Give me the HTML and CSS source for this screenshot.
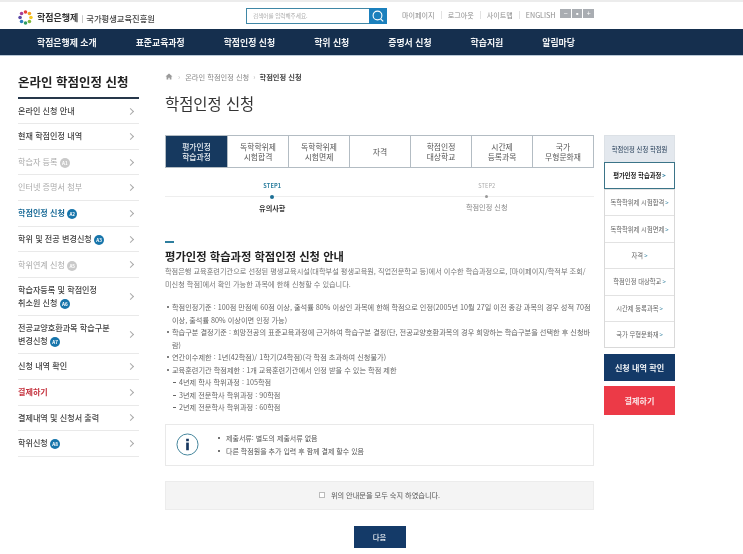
FILE: index.html
```html
<!DOCTYPE html>
<html lang="ko">
<head>
<meta charset="utf-8">
<title>학점인정 신청</title>
<link rel="stylesheet" href="styles.css">
</head>
<body>
<header class="top">
  <div class="brand">
    <svg class="logo" viewBox="0 0 16 16" aria-hidden="true">
      <circle cx="8" cy="2.2" r="1.9" fill="#e8423c"/><circle cx="12.2" cy="3.8" r="1.9" fill="#f2a11f"/>
      <circle cx="13.8" cy="8" r="1.9" fill="#f4c81e"/><circle cx="12.2" cy="12.2" r="1.9" fill="#7cb63a"/>
      <circle cx="8" cy="13.8" r="1.9" fill="#2f9d63"/><circle cx="3.8" cy="12.2" r="1.9" fill="#2a7fc0"/>
      <circle cx="2.2" cy="8" r="1.9" fill="#5b4aa8"/><circle cx="3.8" cy="3.8" r="1.9" fill="#a83f98"/>
    </svg>
    <strong class="brand-main">학점은행제</strong><span class="brand-bar">|</span><span class="brand-sub">국가평생교육진흥원</span>
  </div>
  <form class="search">
    <span class="search-input">검색어를 입력해주세요.</span>
    <span class="search-btn"><svg viewBox="0 0 18 16" aria-hidden="true"><circle cx="8.5" cy="7.5" r="4.4" fill="none" stroke="#fff" stroke-width="1.1"/><path d="M11.6 10.8 14.2 13.4" stroke="#fff" stroke-width="1.2"/></svg></span>
  </form>
  <nav class="util">
    <a>마이페이지</a><a>로그아웃</a><a>사이트맵</a><a class="last">ENGLISH</a>
  </nav>
  <div class="sizer"><span>−</span><span>▪</span><span>+</span></div>
</header>
<nav class="gnb">
  <a>학점은행제 소개</a><a>표준교육과정</a><a>학점인정 신청</a><a>학위 신청</a><a>증명서 신청</a><a>학습지원</a><a>알림마당</a>
</nav>
<div class="wrap">
  <aside class="side">
    <h2>온라인 학점인정 신청</h2>
    <ul class="side-list">
      <li class="h25">온라인 신청 안내</li>
      <li>현재 학점인정 내역</li>
      <li class="off"><span>학습자 등록 <i class="badge">A1</i></span></li>
      <li class="off">인터넷 증명서 첨부</li>
      <li class="on"><span>학점인정 신청 <i class="badge">A2</i></span></li>
      <li><span>학위 및 전공 변경신청 <i class="badge">A3</i></span></li>
      <li class="off"><span>학위연계 신청 <i class="badge">A5</i></span></li>
      <li class="two"><span>학습자등록 및 학점인정<br>취소원 신청 <i class="badge">A6</i></span></li>
      <li class="two"><span>전공교양호환과목 학습구분<br>변경신청 <i class="badge">A7</i></span></li>
      <li>신청 내역 확인</li>
      <li class="pay">결제하기</li>
      <li>결제내역 및 신청서 출력</li>
      <li><span>학위신청 <i class="badge">A8</i></span></li>
    </ul>
  </aside>
  <main class="main">
    <div class="crumb">
      <svg viewBox="0 0 10 9" aria-hidden="true"><path d="M5 .5 .5 4.6h1.4V8.5h2.2V6h1.8v2.5h2.2V4.6h1.4z" fill="#9a9a9a"/></svg>
      <span class="sep">›</span><span>온라인 학점인정 신청</span><span class="sep">›</span><b>학점인정 신청</b>
    </div>
    <h1>학점인정 신청</h1>
    <div class="tabs">
      <a class="active">평가인정<br>학습과정</a><a>독학학위제<br>시험합격</a><a>독학학위제<br>시험면제</a><a>자격</a><a>학점인정<br>대상학교</a><a>시간제<br>등록과목</a><a>국가<br>무형문화재</a>
    </div>
    <div class="steps">
      <div class="step cur"><small>STEP1</small><i></i><b>유의사항</b></div>
      <div class="step"><small>STEP2</small><i></i><b>학점인정 신청</b></div>
    </div>
    <h3>평가인정 학습과정 학점인정 신청 안내</h3>
    <p class="lead">학점은행 교육훈련기관으로 선정된 평생교육시설(대학부설 평생교육원, 직업전문학교 등)에서 이수한 학습과정으로, [마이페이지/학적부 조회/<br>미신청 학점]에서 확인 가능한 과목에 한해 신청할 수 있습니다.</p>
    <ul class="rules">
      <li>학점인정기준 : 100점 만점에 60점 이상, 출석률 80% 이상인 과목에 한해 학점으로 인정(2005년 10월 27일 이전 종강 과목의 경우 성적 70점<br>이상, 출석률 80% 이상이면 인정 가능)</li>
      <li>학습구분 결정기준 : 희망전공의 표준교육과정에 근거하여 학습구분 결정(단, 전공교양호환과목의 경우 희망하는 학습구분을 선택한 후 신청바<br>람)</li>
      <li>연간이수제한 : 1년(42학점)/ 1학기(24학점)(각 학점 초과하여 신청불가)</li>
      <li>교육훈련기관 학점제한 : 1개 교육훈련기관에서 인정 받을 수 있는 학점 제한
        <ul>
          <li>4년제 학사 학위과정 : 105학점</li>
          <li>3년제 전문학사 학위과정 : 90학점</li>
          <li>2년제 전문학사 학위과정 : 60학점</li>
        </ul>
      </li>
    </ul>
    <div class="info">
      <span class="info-icon"><svg viewBox="0 0 24 24" aria-hidden="true"><circle cx="12" cy="12" r="11" fill="none" stroke="#3f8299" stroke-width="1"/><rect x="10.6" y="6" width="2.8" height="2.6" fill="#17375f"/><rect x="10.6" y="10" width="2.8" height="8" fill="#17375f"/></svg></span>
      <ul>
        <li>제출서류: 별도의 제출서류 없음</li>
        <li>다른 학점원을 추가 입력 후 함께 결제 할수 있음</li>
      </ul>
    </div>
    <label class="agree"><span class="box"></span>위의 안내문을 모두 숙지 하였습니다.</label>
    <div class="actions"><a class="next">다음</a></div>
  </main>
  <aside class="rail">
    <div class="rail-head">학점인정 신청 학점원</div>
    <div class="rail-list">
      <a class="sel">평가인정 학습과정 <em>&gt;</em></a>
      <a>독학학위제 시험합격 <em>&gt;</em></a>
      <a>독학학위제 시험면제 <em>&gt;</em></a>
      <a>자격 <em>&gt;</em></a>
      <a>학점인정 대상학교 <em>&gt;</em></a>
      <a>시간제 등록과목 <em>&gt;</em></a>
      <a>국가 무형문화재 <em>&gt;</em></a>
    </div>
    <a class="rail-btn navy">신청 내역 확인</a>
    <a class="rail-btn red">결제하기</a>
  </aside>
</div>
</body>
</html>
```
FILE: styles.css
```css
* { box-sizing: border-box; }
html, body { margin: 0; padding: 0; }
body { width: 743px; height: 554px; overflow: hidden; background: #fff; color: #444; font-family: "Noto Sans CJK KR", "Noto Sans", sans-serif; font-size: 7.3px; filter: blur(.35px); }
ul { list-style: none; margin: 0; padding: 0; }
h1, h2, h3, p { margin: 0; }
i, em { font-style: normal; }

.top { height: 29px; border-top: 2px solid #ececec; display: flex; align-items: flex-start; padding-left: 18px; }
.brand { width: 228px; height: 17px; margin-top: 7px; display: flex; align-items: center; }
.logo { width: 15px; height: 15px; margin-right: 4px; }
.brand-main { font-size: 9px; color: #333; }
.brand-bar { font-size: 7px; color: #888; margin: 0 3px; }
.brand-sub { font-size: 8.3px; color: #444; font-weight: 500; }
.search { width: 141px; height: 16px; margin-top: 6px; display: flex; }
.search-input { flex: 1; border: 1px solid #3f87a6; border-right: 0; padding-left: 6px; font-size: 5.6px; line-height: 14px; color: #aaa; }
.search-btn { width: 18px; background: #1b80bd; display: flex; }
.search-btn svg { width: 18px; height: 16px; }
.util { display: flex; margin-left: 15px; margin-top: 7px; height: 12px; align-items: center; font-size: 7.1px; color: #8d8d8d; flex: none; }
.util a { padding-right: 6px; margin-right: 6px; border-right: 1px solid #e2e2e2; line-height: 8px; white-space: nowrap; }
.util a.last { border: 0; margin: 0; padding-right: 0; }
.sizer { display: flex; gap: 1px; margin-left: 5px; margin-top: 7px; flex: none; }
.sizer span { flex: none; width: 10.5px; height: 9px; background: #a9adb2; color: #fff; font-size: 7px; line-height: 9px; text-align: center; }

.gnb { height: 27px; background: #152f4e; border-bottom: 1px solid #b9c8d6; display: flex; gap: 39px; padding-left: 37px; align-items: center; color: #f3f5f7; font-size: 8.9px; font-weight: 700; white-space: nowrap; }

.wrap { display: flex; padding-left: 18px; align-items: flex-start; }
.side { width: 121px; margin-right: 26px; padding-top: 15px; }
.side h2 { font-size: 12.5px; line-height: 22px; color: #222; font-weight: 700; white-space: nowrap; padding-bottom: 4px; border-bottom: 2px solid #26374a; }
.side-list li { min-height: 25.7px; padding: 0 5px 0 0; border-bottom: 1px solid #e9e9e9; display: flex; align-items: center; justify-content: space-between; font-size: 8.1px; line-height: 12.5px; color: #444; font-weight: 500; white-space: nowrap; }
.side-list li::after { content: ""; width: 4px; height: 4px; border-top: 1px solid #aaa; border-right: 1px solid #aaa; transform: rotate(45deg); margin-right: 1px; flex: none; }
.side-list li.h25 { min-height: 25px; }
.side-list li.two { min-height: 38px; }
.side-list li.off { color: #aaa; font-weight: 400; }
.side-list li.on { color: #1c6c98; font-weight: 700; }
.side-list li.pay { color: #c5333f; font-weight: 700; }
.badge { display: inline-block; width: 10px; height: 10px; border-radius: 50%; background: #1775ab; color: #fff; font-size: 4.6px; line-height: 10px; text-align: center; vertical-align: 0; font-weight: 700; }
.off .badge { background: #c9c9c9; }

.main { width: 429px; margin-right: 10px; padding-top: 14px; }
.crumb { display: flex; align-items: center; height: 13px; font-size: 7.25px; color: #888; white-space: nowrap; }
.crumb svg { width: 8px; height: 7px; }
.crumb .sep { color: #bbb; margin: 0 4px; }
.crumb span:nth-child(2) { margin: 0 5px; }
.crumb b { color: #444; }
h1 { font-size: 15.4px; font-weight: 400; line-height: 22px; color: #333; margin-top: 9px; }
.tabs { display: grid; grid-template-columns: repeat(7, 1fr); height: 33px; margin-top: 21px; border: 1px solid #b3bcc3; }
.tabs a { display: flex; align-items: center; justify-content: center; text-align: center; font-size: 7.8px; line-height: 10px; color: #555; border-left: 1px solid #b3bcc3; white-space: nowrap; }
.tabs a:first-child { border-left: 0; }
.tabs a.active { background: #16395f; color: #e8edf2; font-weight: 500; }

.steps { display: grid; grid-template-columns: 1fr 1fr; margin-top: 13px; position: relative; text-align: center; }
.steps::before { content: ""; position: absolute; left: 0; right: 0; top: 15px; border-top: 1px solid #eee; }
.step { display: flex; flex-direction: column; align-items: center; }
.step small { font-size: 5.6px; line-height: 9px; height: 9px; margin-top: 1px; color: #aaa; letter-spacing: .1px; }
.step i { width: 3px; height: 3px; border-radius: 50%; background: #999; margin-top: 4px; position: relative; }
.step b { font-size: 7.2px; font-weight: 400; color: #888; line-height: 11px; margin-top: 4px; }
.step.cur small { color: #2d7f9f; font-weight: 700; }
.step.cur i { background: #1d6f95; width: 4px; height: 4px; }
.step.cur b { font-weight: 700; color: #333; }

h3 { position: relative; margin-top: 34px; font-size: 11.3px; line-height: 16px; color: #222; font-weight: 700; white-space: nowrap; }
h3::before { content: ""; position: absolute; left: 0; top: -7px; width: 9px; height: 1.5px; background: #2e7e9e; }
.lead { margin-top: 1px; font-size: 7.2px; line-height: 13px; color: #777; white-space: nowrap; }
.rules { margin-top: 10px; font-size: 7.2px; line-height: 12.5px; color: #666; white-space: nowrap; }
.rules > li { padding-left: 7px; position: relative; }
.rules > li::before { content: ""; position: absolute; left: 2px; top: 5px; width: 2px; height: 2px; border-radius: 50%; background: #555; }
.rules ul li { padding-left: 7px; position: relative; }
.rules ul li::before { content: ""; position: absolute; left: 1px; top: 6px; width: 3px; height: 1px; background: #666; }

.info { margin-top: 10px; height: 42px; border: 1px solid #e9e9e9; display: flex; align-items: center; padding-left: 10px; }
.info-icon { width: 23px; height: 23px; margin-right: 27px; }
.info-icon svg { width: 23px; height: 23px; display: block; }
.info ul { font-size: 7px; line-height: 13px; color: #555; }
.info li { position: relative; }
.info li::before { content: ""; position: absolute; left: -8px; top: 5px; width: 2px; height: 2px; border-radius: 50%; background: #444; }
.agree { margin-top: 15px; height: 29px; background: #f4f4f4; border: 1px solid #ececec; display: flex; align-items: center; justify-content: center; font-size: 7.2px; color: #555; }
.box { width: 6px; height: 6px; border: 1px solid #bbb; background: #fff; margin-right: 6px; }
.actions { display: flex; justify-content: center; margin-top: 16px; }
.next { width: 52px; height: 22px; background: #143a68; color: #e9eef3; font-size: 7.4px; font-weight: 500; display: flex; align-items: center; justify-content: center; }

.rail { width: 71px; padding-top: 79px; text-align: center; }
.rail-head { height: 27px; background: #e3e8ee; border: 1px solid #dce1e6; border-bottom: 0; display: flex; align-items: center; justify-content: center; font-size: 6.3px; color: #3a5068; font-weight: 500; white-space: nowrap; }
.rail-list { border: 1px solid #d9d9d9; border-top: 0; }
.rail-list a { height: 26.4px; display: flex; align-items: center; justify-content: center; gap: 1px; font-size: 6.3px; color: #666; border-top: 1px solid #e2e2e2; white-space: nowrap; }
.rail-list a em { color: #2e7e9e; font-size: 6px; }
.rail-list a.sel { height: 27px; margin: 0 -1px; width: calc(100% + 2px); border: 1px solid #3b7488; color: #222; font-weight: 700; background: #fff; }
.rail-btn { display: flex; align-items: center; justify-content: center; font-size: 8.1px; font-weight: 700; }
.rail-btn.navy { height: 27px; margin-top: 6px; background: #143a68; color: #edf1f5; }
.rail-btn.red { height: 29px; margin-top: 5px; background: #ec3a47; color: #fbe5e7; }
```
